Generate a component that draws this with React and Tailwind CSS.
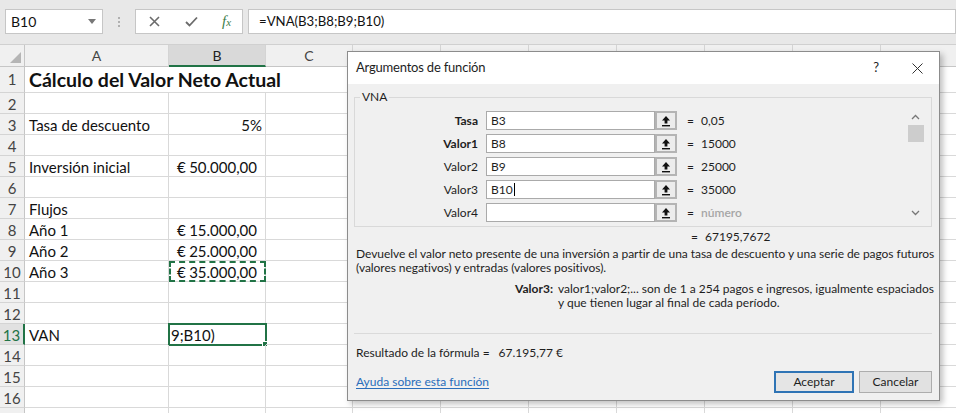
import React from 'react';

const sheetFont = { fontFamily: 'Lato, "Liberation Sans", sans-serif' };
const dlgFont = { fontFamily: 'Lato, "Noto Sans", sans-serif' };

const RefIcon = () => (
  <svg width="10" height="12" viewBox="0 0 10 12">
    <path d="M5 1 L9 5.5 H6.4 V8.5 H3.6 V5.5 H1 Z" fill="#111" />
    <rect x="1" y="10" width="8" height="1.4" fill="#111" />
  </svg>
);

const DialogRow = ({ label, bold, value, result, muted, caret }) => (
  <div className="flex items-center h-[19px]">
    <div className={`w-[123px] text-right ${bold ? 'font-bold' : ''}`}>{label}</div>
    <div className="ml-[8px] w-[169px] h-[19px] bg-white border border-[#aaaaaa] flex items-center pl-[4px]">
      {value}
      {caret && <span className="inline-block w-px h-[13px] bg-black ml-px" />}
    </div>
    <div className="w-[22px] h-[19px] border-2 border-[#b4b4b4] bg-[#ececec] flex items-center justify-center">
      <RefIcon />
    </div>
    <div className="ml-[10px] w-[14px]">=</div>
    <div className={muted ? 'text-[#a6a6a6] font-semibold' : ''}>{result}</div>
  </div>
);

const Dialog = () => (
  <div
    className="absolute left-[347px] top-[51px] w-[593px] h-[350px] bg-[#f0f0f0] border border-[#8c8c8c] shadow-[3px_3px_6px_rgba(0,0,0,0.25)] text-[12px] text-[#1e1e1e] flex flex-col"
    style={dlgFont}
  >
    <div className="h-[32px] bg-white flex items-center pl-[8px] pr-[16px] text-[13px] tracking-[-0.2px]">
      <span className="flex-1">Argumentos de función</span>
      <span className="w-[20px] text-center text-[13px]">?</span>
      <svg className="ml-[26px]" width="11" height="11" viewBox="0 0 11 11">
        <path d="M0.5 0.5 L10.5 10.5 M10.5 0.5 L0.5 10.5" stroke="#333" strokeWidth="1" />
      </svg>
    </div>

    <fieldset className="ml-[6px] mt-[6px] w-[578px] border border-[#d9d9d9] pt-[7px] pb-[4px] flex">
      <legend className="ml-[5px] px-[2px] leading-[14px]">VNA</legend>
      <div className="flex flex-col gap-[4px] flex-1">
        <DialogRow label="Tasa" bold value="B3" result="0,05" />
        <DialogRow label="Valor1" bold value="B8" result="15000" />
        <DialogRow label="Valor2" value="B9" result="25000" />
        <DialogRow label="Valor3" value="B10" result="35000" caret />
        <DialogRow label="Valor4" value="" result="número" muted />
      </div>
    </fieldset>

    <div className="ml-[343px] mt-[3px] leading-[14px] flex">
      <span className="w-[14px]">=</span>
      <span>67195,7672</span>
    </div>

    <p className="ml-[8px] mt-[3px] leading-[14px] w-[586px] tracking-[-0.05px]">
      Devuelve el valor neto presente de una inversión a partir de una tasa de descuento y una serie de pagos futuros
      (valores negativos) y entradas (valores positivos).
    </p>

    <div className="mt-[7px] flex leading-[14px]">
      <span className="w-[205px] text-right font-bold">Valor3:</span>
      <span className="ml-[5px] w-[378px]">
        valor1;valor2;... son de 1 a 254 pagos e ingresos, igualmente espaciados y que tienen lugar al final de cada período.
      </span>
    </div>

    <div className="ml-[6px] mt-[23px] w-[578px] h-px bg-[#dadada]" />

    <div className="ml-[8px] mt-[12px] leading-[14px] flex">
      <span>Resultado de la fórmula =</span>
      <span className="ml-[9px]">67.195,77 €</span>
    </div>

    <div className="mt-[11px] ml-[8px] flex items-center">
      <a className="flex-1 text-[#2a6ebb] underline underline-offset-2 leading-[14px]">Ayuda sobre esta función</a>
      <button className="w-[80px] h-[22px] bg-[#e5e5e5] border-2 border-[#2f74b5]">Aceptar</button>
      <button className="ml-[5px] mr-[7px] w-[73px] h-[22px] bg-[#e1e1e1] border border-[#adadad]">Cancelar</button>
    </div>

    <div className="absolute left-[559px] top-[59px] w-[17px] h-[110px] flex flex-col items-center">
      <svg className="mt-[3px]" width="9" height="6" viewBox="0 0 9 6">
        <path d="M1 5 L4.5 1.5 L8 5" stroke="#777" strokeWidth="1.3" fill="none" />
      </svg>
      <div className="mt-[5px] w-[16px] h-[17px] bg-[#cdcdcd]" />
      <div className="flex-1" />
      <svg className="mb-[5px]" width="9" height="6" viewBox="0 0 9 6">
        <path d="M1 1 L4.5 4.5 L8 1" stroke="#777" strokeWidth="1.3" fill="none" />
      </svg>
    </div>
  </div>
);

const COLS = ['w-[144px]', 'w-[97px]', 'w-[87px]', 'w-[88px]', 'w-[88px]', 'w-[88px]', 'w-[88px]', 'w-[88px]', 'w-[88px]', 'w-[88px]'];
const LETTERS = ['A', 'B', 'C', 'D', 'E', 'F', 'G', 'H', 'I', 'J'];

const Euro = ({ v }) => (
  <div className="flex-1 flex justify-between pl-[8px] pr-[8px]">
    <span>€</span>
    <span>{v}</span>
  </div>
);

const rows = [
  { n: 2 },
  { n: 3, a: 'Tasa de descuento', b: <div className="flex-1 text-right pr-[3px]">5%</div> },
  { n: 4 },
  { n: 5, a: 'Inversión inicial', b: <Euro v="50.000,00" /> },
  { n: 6 },
  { n: 7, a: 'Flujos' },
  { n: 8, a: 'Año 1', b: <Euro v="15.000,00" /> },
  { n: 9, a: 'Año 2', b: <Euro v="25.000,00" /> },
  { n: 10, a: 'Año 3', b: <Euro v="35.000,00" />, dashed: true },
  { n: 11 },
  { n: 12 },
  { n: 13, a: 'VAN', b: <div className="pl-[2px]">9;B10)</div>, active: true },
  { n: 14 },
  { n: 15 },
  { n: 16 },
  { n: 17 },
];

const SheetRow = ({ r }) => (
  <div className="flex h-[21px] shrink-0">
    <div
      className={`w-[25px] shrink-0 flex items-center justify-center pt-[3px] border-b border-[#d4d4d4] ${
        r.active ? 'bg-[#e1e1e1] text-[#217346] border-r-2 border-r-[#217346]' : 'bg-[#f0f0f0] text-[#444] border-r border-r-[#c6c6c6]'
      }`}
    >
      {r.n}
    </div>
    {COLS.map((w, i) => (
      <div
        key={i}
        className={`${w} shrink-0 flex items-center pt-[3px] border-r border-b border-[#d9d9d9] relative ${
          i === 1 && r.dashed ? 'outline-2 outline-dashed outline-[#217346] outline-offset-[-2px]' : ''
        } ${i === 1 && r.active ? 'outline-2 outline-[#217346] outline-offset-[-1px]' : ''}`}
      >
        {i === 0 && r.a && <span className="pl-[4px] whitespace-nowrap">{r.a}</span>}
        {i === 1 && r.b}
        {i === 1 && r.active && (
          <span className="absolute -right-[3px] -bottom-[3px] w-[6px] h-[6px] bg-[#217346] border border-white" />
        )}
      </div>
    ))}
  </div>
);

export default function App() {
  return (
    <div className="w-[956px] h-[413px] overflow-hidden relative bg-white text-[15px] text-[#111]" style={sheetFont}>
      <div className="h-[45px] bg-[#e8e8e8] flex pl-[5px] pt-[9px] border-b border-[#d0d0d0]">
        <div className="w-[98px] h-[25px] bg-white border border-[#c6c6c6] flex items-center pl-[5px] pr-[6px] text-[14px]">
          <span className="flex-1">B10</span>
          <svg width="8" height="5" viewBox="0 0 8 5">
            <path d="M0 0 H8 L4 5 Z" fill="#777" />
          </svg>
        </div>
        <div className="w-[32px] h-[25px] flex flex-col items-center justify-center gap-[2px]">
          <span className="w-[2px] h-[2px] bg-[#b0b0b0]" />
          <span className="w-[2px] h-[2px] bg-[#b0b0b0]" />
          <span className="w-[2px] h-[2px] bg-[#b0b0b0]" />
        </div>
        <div className="w-[108px] h-[25px] bg-white border border-[#c6c6c6] flex items-center">
          <svg className="ml-[13px]" width="11" height="11" viewBox="0 0 11 11">
            <path d="M1 1 L10 10 M10 1 L1 10" stroke="#6b6b6b" strokeWidth="1.6" />
          </svg>
          <svg className="ml-[25px]" width="13" height="11" viewBox="0 0 13 11">
            <path d="M1 6 L4.5 9.5 L12 1.5" stroke="#6b6b6b" strokeWidth="1.8" fill="none" />
          </svg>
          <span
            className="ml-[24px] italic text-[#3e7d4a] text-[15px] leading-none"
            style={{ fontFamily: '"Liberation Serif", serif' }}
          >
            f<span className="text-[11px]">x</span>
          </span>
        </div>
        <div className="ml-[5px] flex-1 h-[25px] bg-white border border-[#c6c6c6] flex items-center pl-[10px] text-[13.2px]">
          =VNA(B3;B8;B9;B10)
        </div>
      </div>

      <div className="flex h-[22px] text-[14px] text-[#444]">
        <div className="w-[25px] shrink-0 bg-[#f0f0f0] border-r border-b border-[#c6c6c6] relative">
          <svg className="absolute right-[3px] bottom-[3px]" width="11" height="11" viewBox="0 0 11 11">
            <path d="M11 0 V11 H0 Z" fill="#b5b5b5" />
          </svg>
        </div>
        {COLS.map((w, i) => (
          <div
            key={i}
            className={`${w} shrink-0 flex items-center justify-center border-r border-[#d4d4d4] ${
              i === 1 ? 'bg-[#d9d9d9] border-b-2 border-b-[#217346] text-[#222]' : 'bg-[#f0f0f0] border-b border-b-[#c6c6c6]'
            }`}
          >
            {LETTERS[i]}
          </div>
        ))}
      </div>

      <div className="flex h-[26px]">
        <div className="w-[25px] shrink-0 flex items-center justify-center bg-[#f0f0f0] text-[#444] border-r border-[#c6c6c6] border-b border-b-[#d4d4d4]">
          1
        </div>
        <div className="w-[328px] shrink-0 flex items-center pl-[4px] text-[19.5px] font-bold border-r border-b border-[#d9d9d9] whitespace-nowrap">
          Cálculo del Valor Neto Actual
        </div>
        {COLS.slice(3).map((w, i) => (
          <div key={i} className={`${w} shrink-0 border-r border-b border-[#d9d9d9]`} />
        ))}
      </div>

      {rows.map((r) => (
        <SheetRow key={r.n} r={r} />
      ))}

      <Dialog />
    </div>
  );
}
